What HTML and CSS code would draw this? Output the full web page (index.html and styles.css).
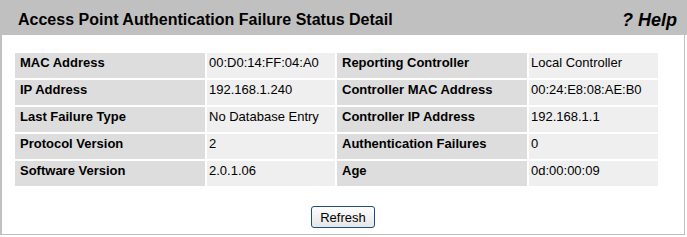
FILE: index.html
```html
<!DOCTYPE html>
<html lang="en">
<head>
    <meta charset="UTF-8">
    <title>Access Point Authentication Failure Status Detail</title>
    <link rel="stylesheet" href="styles.css">
</head>
<body>
    <div class="page-header">
        <span class="page-title">Access Point Authentication Failure Status Detail</span>
        <a class="help-link" href="#">? Help</a>
    </div>

    <div class="panel">
        <table class="detail-table">
            <tr>
                <td class="label">MAC Address</td>
                <td class="value">00:D0:14:FF:04:A0</td>
                <td class="label">Reporting Controller</td>
                <td class="value">Local Controller</td>
            </tr>
            <tr>
                <td class="label">IP Address</td>
                <td class="value">192.168.1.240</td>
                <td class="label">Controller MAC Address</td>
                <td class="value">00:24:E8:08:AE:B0</td>
            </tr>
            <tr>
                <td class="label">Last Failure Type</td>
                <td class="value">No Database Entry</td>
                <td class="label">Controller IP Address</td>
                <td class="value">192.168.1.1</td>
            </tr>
            <tr>
                <td class="label">Protocol Version</td>
                <td class="value">2</td>
                <td class="label">Authentication Failures</td>
                <td class="value">0</td>
            </tr>
            <tr>
                <td class="label">Software Version</td>
                <td class="value">2.0.1.06</td>
                <td class="label">Age</td>
                <td class="value">0d:00:00:09</td>
            </tr>
        </table>

        <div class="buttons">
            <button type="button" class="btn">Refresh</button>
        </div>
    </div>
</body>
</html>
```

FILE: styles.css
```css
body { margin: 0; font-family: "Liberation Sans", Arial, sans-serif; font-size: 13px; color: #000; background: #fff; }

.page-header {
    display: flex;
    justify-content: space-between;
    height: 35px;
    box-sizing: border-box;
    padding: 11px 10px 0 18px;
    background: #c0c0c0;
    line-height: 18px;
}
.page-title { font-size: 16px; font-weight: bold; }
.help-link { font-size: 18px; font-weight: bold; font-style: italic; color: #000; text-decoration: none; }

.panel {
    margin-right: 2px;
    border-left: 2px solid #c0c0c0;
    border-right: 1px solid #c0c0c0;
    border-bottom: 1px solid #c0c0c0;
    padding: 16px 0 6px 11px;
}

.detail-table {
    table-layout: fixed;
    width: 647px;
    border-spacing: 2px;
}
.detail-table td {
    height: 25px;
    box-sizing: border-box;
    padding: 2px 2px 0 2px;
    vertical-align: top;
    line-height: 15px;
    white-space: nowrap;
}
.detail-table td.label { background: #dddddd; font-weight: bold; padding-left: 5px; width: 190px; }
.detail-table td.value { background: #efefef; width: 128px; }
.detail-table td.value:last-child { width: 129px; }

.buttons { text-align: center; margin-top: 18px; margin-left: -11px; }
.btn {
    height: 22px;
    padding: 0 8px;
    font-family: "Liberation Sans", Arial, sans-serif;
    font-size: 13px;
    color: #000;
    border: 1px solid #1c4f7c;
    border-radius: 3px;
    background: linear-gradient(#fdfdfd, #e6e6e6);
}
```
